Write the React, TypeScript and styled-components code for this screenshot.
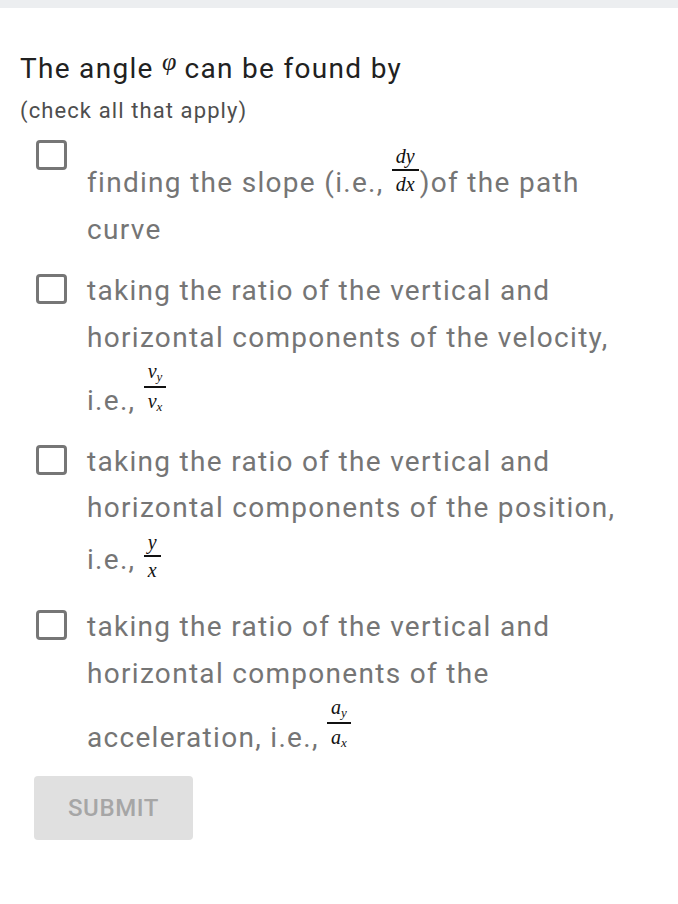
import React from "react";
import styled, { createGlobalStyle } from "styled-components";

const Global = createGlobalStyle`
  html, body { margin: 0; padding: 0; background: #ffffff; }
  body { font-family: Roboto, "Liberation Sans", Arial, sans-serif; }
`;

const TopBar = styled.div`
  height: 8px;
  background: #eceef0;
`;

const Content = styled.div`
  padding: 41px 20px 40px 20px;
`;

const Title = styled.h2`
  margin: 0;
  font-size: 28px;
  font-weight: 400;
  line-height: 40px;
  letter-spacing: 1.3px;
  color: #212121;
`;

const Phi = styled.span`
  font-family: "Liberation Serif", "DejaVu Serif", serif;
  font-style: italic;
  font-size: 26px;
  line-height: 1;
  vertical-align: 8px;
  letter-spacing: 0;
`;

const Subtitle = styled.p`
  margin: 6px 0 0 0;
  font-size: 22px;
  line-height: 32px;
  letter-spacing: 1.1px;
  color: #4e4e4e;
`;

const List = styled.div`
  display: flex;
  flex-direction: column;
  margin-top: 19px;
  padding-left: 16px;
`;

const Option = styled.label<{ $gap: number }>`
  display: flex;
  align-items: flex-start;
  gap: 20px;
  margin-bottom: ${(p) => p.$gap}px;
  cursor: pointer;
`;

const Box = styled.span<{ $top: number }>`
  flex: 0 0 auto;
  box-sizing: border-box;
  width: 31px;
  height: 30px;
  margin-top: ${(p) => p.$top}px;
  border: 3px solid #767676;
  border-radius: 4px;
  background: #fff;
`;

const Label = styled.span`
  flex: 0 1 550px;
  font-size: 28px;
  line-height: 46.5px;
  letter-spacing: 1.3px;
  color: #757575;
`;

const Frac = styled.span<{ $shift: number }>`
  display: inline-flex;
  flex-direction: column;
  align-items: center;
  vertical-align: ${(p) => p.$shift}px;
  margin: 0 1px 0 0;
  font-family: "Liberation Serif", "DejaVu Serif", serif;
  font-style: italic;
  font-size: 20px;
  line-height: 1;
  letter-spacing: 0;
  color: #111;
`;

const Num = styled.span`
  padding: 0 4px 3px 4px;
  border-bottom: 2px solid #111;
`;

const Den = styled.span`
  padding: 3px 4px 0 4px;
`;

const Sub = styled.sub`
  font-size: 13px;
  line-height: 1;
  vertical-align: -3px;
`;

const Submit = styled.button`
  display: block;
  margin-top: 14px;
  margin-left: 14px;
  width: 159px;
  height: 64px;
  border: none;
  border-radius: 4px;
  background: #e0e0e0;
  color: #a6a6a6;
  font-family: Roboto, "Liberation Sans", Arial, sans-serif;
  font-size: 24px;
  font-weight: 500;
  letter-spacing: 0.6px;
`;

export default function App() {
  return (
    <>
      <Global />
      <TopBar />
      <Content>
        <Title>
          The angle <Phi>φ</Phi> can be found by
        </Title>
        <Subtitle>(check all that apply)</Subtitle>
        <List>
          <Option $gap={15}>
            <Box $top={-6} />
            <Label>
              finding the slope (i.e.,{" "}
              <Frac $shift={29}>
                <Num>dy</Num>
                <Den>dx</Den>
              </Frac>
              )of the path curve
            </Label>
          </Option>
          <Option $gap={14}>
            <Box $top={6} />
            <Label>
              taking the ratio of the vertical and horizontal components of the velocity, i.e.,{" "}
              <Frac $shift={32}>
                <Num>
                  v<Sub>y</Sub>
                </Num>
                <Den>
                  v<Sub>x</Sub>
                </Den>
              </Frac>
            </Label>
          </Option>
          <Option $gap={21}>
            <Box $top={6} />
            <Label>
              taking the ratio of the vertical and horizontal components of the position, i.e.,{" "}
              <Frac $shift={20}>
                <Num>y</Num>
                <Den>x</Den>
              </Frac>
            </Label>
          </Option>
          <Option $gap={0}>
            <Box $top={6} />
            <Label>
              taking the ratio of the vertical and horizontal components of the acceleration, i.e.,{" "}
              <Frac $shift={33}>
                <Num>
                  a<Sub>y</Sub>
                </Num>
                <Den>
                  a<Sub>x</Sub>
                </Den>
              </Frac>
            </Label>
          </Option>
        </List>
        <Submit disabled>SUBMIT</Submit>
      </Content>
    </>
  );
}
